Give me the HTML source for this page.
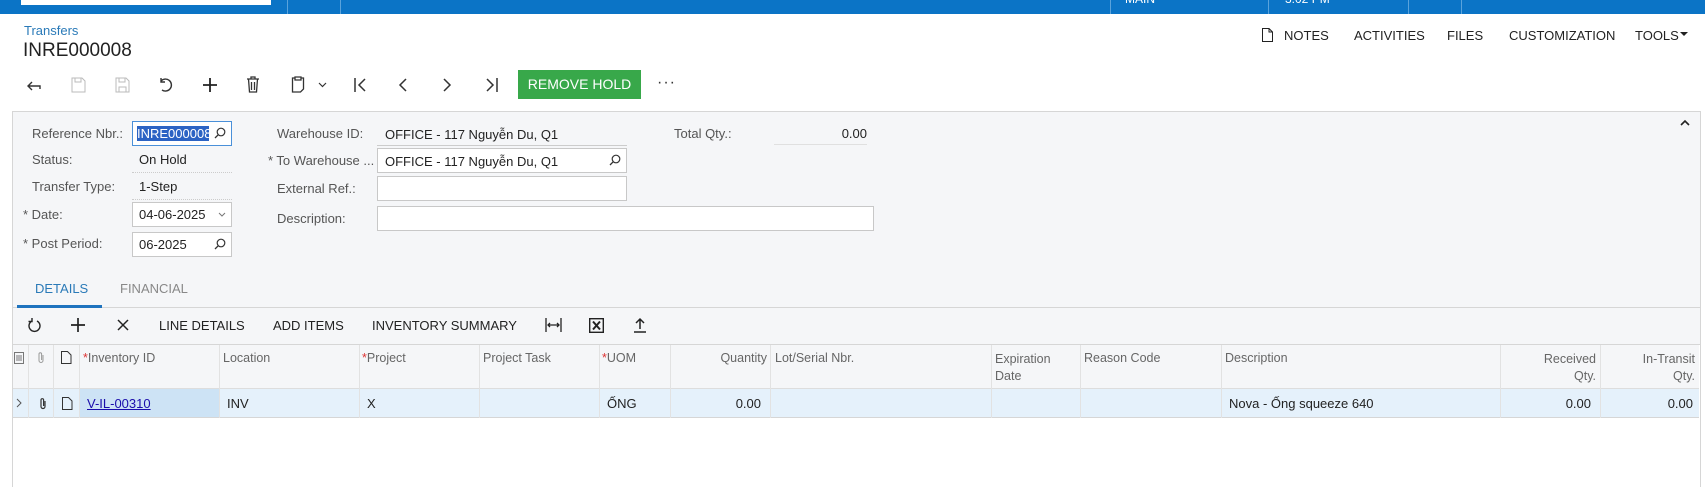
<!DOCTYPE html>
<html><head><meta charset="utf-8"><style>
*{box-sizing:border-box;margin:0;padding:0}
body{width:1705px;height:487px;overflow:hidden;background:#fff;font-family:"Liberation Sans","Noto Sans CJK SC",sans-serif;font-size:13px;color:#222;position:relative}
.a{position:absolute;white-space:nowrap}
.lbl{color:#555}
.inp{position:absolute;background:#fff;border:1px solid #c8c8c8;height:25px}
.hd{color:#666;font-size:12.5px}
.vl{position:absolute;top:345px;width:1px;height:73px;background:#e2e2e2}
.star{color:#d33}
svg{position:absolute}
</style></head><body>
<!-- top bar -->
<div class="a" style="left:0;top:0;width:1705px;height:14px;background:#0b74c6"></div>
<div class="a" style="left:21px;top:0;width:250px;height:5px;background:#fff"></div>
<div class="a" style="left:287px;top:0;width:1px;height:14px;background:#5aa3dc"></div>
<div class="a" style="left:340px;top:0;width:1px;height:14px;background:#5aa3dc"></div>
<div class="a" style="left:1110px;top:0;width:1px;height:14px;background:#5aa3dc"></div>
<div class="a" style="left:1268px;top:0;width:1px;height:14px;background:#5aa3dc"></div>
<div class="a" style="left:1408px;top:0;width:1px;height:14px;background:#5aa3dc"></div>
<div class="a" style="left:1461px;top:0;width:1px;height:14px;background:#5aa3dc"></div>
<div class="a" style="left:1125px;top:-8px;color:#fff;font-size:12px">MAIN</div>
<div class="a" style="left:1285px;top:-8px;color:#fff;font-size:12px">3:02 PM</div>

<div class="a" style="left:24px;top:23px;color:#2a7ab8;font-size:13px">Transfers</div>
<div class="a" style="left:23px;top:40px;font-size:19px;color:#222">INRE000008</div>

<!-- right links -->
<svg style="left:1262px;top:28px" width="11" height="14" viewBox="0 0 11 14"><path d="M.5.5h6.5l3.5 3.5v9.5h-10z M7 .5v3.5h3.5" fill="none" stroke="#222"/></svg>
<div class="a" style="left:1284px;top:28px">NOTES</div>
<div class="a" style="left:1354px;top:28px">ACTIVITIES</div>
<div class="a" style="left:1447px;top:28px">FILES</div>
<div class="a" style="left:1509px;top:28px">CUSTOMIZATION</div>
<div class="a" style="left:1635px;top:28px">TOOLS</div>
<div class="a" style="left:1680px;top:32px;width:0;height:0;border-left:4px solid transparent;border-right:4px solid transparent;border-top:4px solid #222"></div>

<!-- toolbar -->
<svg style="left:26px;top:77px" width="16" height="16" viewBox="0 0 16 16"><path d="M14 12V9H3 M6 5L2 9l4 4" fill="none" stroke="#333" stroke-width="1.4"/></svg>
<svg style="left:71px;top:77px" width="15" height="16" viewBox="0 0 15 16"><path d="M1 1h10l3 3v11H1z M4 1v4h6V1" fill="none" stroke="#bbb"/></svg>
<svg style="left:115px;top:77px" width="15" height="16" viewBox="0 0 15 16"><path d="M1 1h10l3 3v11H1z M4 1v4h6V1 M4 15v-5h7v5" fill="none" stroke="#bbb"/></svg>
<svg style="left:157px;top:77px" width="16" height="16" viewBox="0 0 16 16"><path d="M4 4a6 6 0 1 1 1 9 M4 1v4h4" fill="none" stroke="#333" stroke-width="1.4"/></svg>
<svg style="left:202px;top:77px" width="16" height="16" viewBox="0 0 16 16"><path d="M8 1v14M1 8h14" stroke="#222" stroke-width="1.8"/></svg>
<svg style="left:246px;top:76px" width="14" height="17" viewBox="0 0 14 17"><path d="M1 3h12M5 3V1h4v2M2.5 3l1 13h7l1-13M5.5 6v8M8.5 6v8" fill="none" stroke="#333" stroke-width="1.3"/></svg>
<svg style="left:291px;top:76px" width="14" height="17" viewBox="0 0 14 17"><path d="M4 2H1.5v14h8l3-3V2H10 M4 1h6v3H4z" fill="none" stroke="#333" stroke-width="1.3"/></svg>
<svg style="left:318px;top:82px" width="9" height="6" viewBox="0 0 9 6"><path d="M1 1l3.5 3.5L8 1" fill="none" stroke="#333" stroke-width="1.2"/></svg>
<svg style="left:353px;top:77px" width="14" height="16" viewBox="0 0 14 16"><path d="M2 1v14 M12 2L6 8l6 6" fill="none" stroke="#333" stroke-width="1.5"/></svg>
<svg style="left:398px;top:77px" width="10" height="16" viewBox="0 0 10 16"><path d="M8 2L2 8l6 6" fill="none" stroke="#333" stroke-width="1.5"/></svg>
<svg style="left:442px;top:77px" width="10" height="16" viewBox="0 0 10 16"><path d="M2 2l6 6-6 6" fill="none" stroke="#333" stroke-width="1.5"/></svg>
<svg style="left:485px;top:77px" width="14" height="16" viewBox="0 0 14 16"><path d="M12 1v14 M2 2l6 6-6 6" fill="none" stroke="#333" stroke-width="1.5"/></svg>
<div class="a" style="left:518px;top:70px;width:123px;height:29px;background:#38a84a;color:#fff;font-size:14px;line-height:29px;text-align:center">REMOVE HOLD</div>
<div class="a" style="left:657px;top:74px;font-size:16px;color:#333;letter-spacing:1px">···</div>

<!-- panel -->
<div class="a" style="left:12px;top:111px;width:1689px;height:376px;background:#fff;border:1px solid #d6d6d6;border-bottom:none"></div>
<div class="a" style="left:13px;top:112px;width:1687px;height:232px;background:#f5f6f8"></div>
<svg style="left:1680px;top:119px" width="10" height="7" viewBox="0 0 10 7"><path d="M1 6l4-4 4 4" fill="none" stroke="#222" stroke-width="1.6"/></svg>

<div class="a lbl" style="left:32px;top:126px">Reference Nbr.:</div>
<div class="inp" style="left:132px;top:121px;width:100px;border-color:#4a90d9;border-width:1.5px"></div>
<div class="a" style="left:137px;top:126px;background:#2b63c4;color:#fff;width:72px;overflow:hidden">INRE000008</div>
<svg style="left:214px;top:127px" width="12" height="12" viewBox="0 0 12 12"><circle cx="7" cy="5" r="3.8" fill="none" stroke="#333" stroke-width="1.2"/><path d="M4.3 7.7L1 11" stroke="#333" stroke-width="1.3"/></svg>
<div class="a lbl" style="left:32px;top:152px">Status:</div>
<div class="a" style="left:139px;top:152px">On Hold</div>
<div class="a" style="left:132px;top:172px;width:100px;border-top:1px dotted #ccc"></div>
<div class="a lbl" style="left:32px;top:179px">Transfer Type:</div>
<div class="a" style="left:139px;top:179px">1-Step</div>
<div class="a" style="left:132px;top:199px;width:100px;border-top:1px dotted #ccc"></div>
<div class="a lbl" style="left:23px;top:207px">* Date:</div>
<div class="inp" style="left:132px;top:202px;width:100px"></div>
<div class="a" style="left:139px;top:207px">04-06-2025</div>
<svg style="left:218px;top:212px" width="8" height="5" viewBox="0 0 8 5"><path d="M1 1l3 3 3-3" fill="none" stroke="#777"/></svg>
<div class="a lbl" style="left:23px;top:236px">* Post Period:</div>
<div class="inp" style="left:132px;top:232px;width:100px"></div>
<div class="a" style="left:139px;top:237px">06-2025</div>
<svg style="left:214px;top:238px" width="12" height="12" viewBox="0 0 12 12"><circle cx="7" cy="5" r="3.8" fill="none" stroke="#333" stroke-width="1.2"/><path d="M4.3 7.7L1 11" stroke="#333" stroke-width="1.3"/></svg>

<div class="a lbl" style="left:277px;top:126px">Warehouse ID:</div>
<div class="a" style="left:385px;top:127px">OFFICE - 117 Nguyễn Du, Q1</div>
<div class="a" style="left:377px;top:145px;width:250px;border-top:1px solid #ccc"></div>
<div class="a lbl" style="left:268px;top:153px">* To Warehouse ...</div>
<div class="inp" style="left:377px;top:148px;width:250px"></div>
<div class="a" style="left:385px;top:154px">OFFICE - 117 Nguyễn Du, Q1</div>
<svg style="left:609px;top:154px" width="12" height="12" viewBox="0 0 12 12"><circle cx="7" cy="5" r="3.8" fill="none" stroke="#333" stroke-width="1.2"/><path d="M4.3 7.7L1 11" stroke="#333" stroke-width="1.3"/></svg>
<div class="a lbl" style="left:277px;top:181px">External Ref.:</div>
<div class="inp" style="left:377px;top:176px;width:250px"></div>
<div class="a lbl" style="left:277px;top:211px">Description:</div>
<div class="inp" style="left:377px;top:206px;width:497px"></div>

<div class="a lbl" style="left:674px;top:126px">Total Qty.:</div>
<div class="a" style="left:774px;top:126px;width:93px;text-align:right">0.00</div>
<div class="a" style="left:774px;top:144px;width:93px;border-top:1px solid #e0e0e0"></div>

<!-- tabs -->
<div class="a" style="left:35px;top:281px;color:#2a7ab8">DETAILS</div>
<div class="a" style="left:120px;top:281px;color:#888">FINANCIAL</div>
<div class="a" style="left:13px;top:307px;width:1687px;height:1px;background:#d6d6d6"></div>
<div class="a" style="left:17px;top:305px;width:85px;height:3px;background:#1e73be"></div>

<!-- grid toolbar -->
<svg style="left:28px;top:318px" width="14" height="15" viewBox="0 0 14 15"><path d="M4 3a5.5 5.5 0 1 0 5 0 M4 0v3.5H.5" fill="none" stroke="#222" stroke-width="1.4"/></svg>
<svg style="left:71px;top:318px" width="14" height="14" viewBox="0 0 14 14"><path d="M7 0v14M0 7h14" stroke="#222" stroke-width="1.7"/></svg>
<svg style="left:117px;top:319px" width="12" height="12" viewBox="0 0 12 12"><path d="M1 1l10 10M11 1L1 11" stroke="#222" stroke-width="1.5"/></svg>
<div class="a" style="left:159px;top:318px">LINE DETAILS</div>
<div class="a" style="left:273px;top:318px">ADD ITEMS</div>
<div class="a" style="left:372px;top:318px">INVENTORY SUMMARY</div>
<svg style="left:545px;top:318px" width="17" height="14" viewBox="0 0 17 14"><path d="M1 0v14M16 0v14M3 7h11M5 5l-2 2 2 2M12 5l2 2-2 2" fill="none" stroke="#222" stroke-width="1.3"/></svg>
<svg style="left:589px;top:318px" width="15" height="15" viewBox="0 0 15 15"><rect x=".7" y=".7" width="13.6" height="13.6" fill="none" stroke="#222" stroke-width="1.4"/><path d="M4 3.5l7 8M11 3.5l-7 8" stroke="#222" stroke-width="2"/></svg>
<svg style="left:633px;top:317px" width="14" height="16" viewBox="0 0 14 16"><path d="M7 12V2M3 6l4-4 4 4M1 15h12" fill="none" stroke="#222" stroke-width="1.5"/></svg>
<div class="a" style="left:13px;top:344px;width:1687px;height:1px;background:#d6d6d6"></div>

<!-- grid -->
<div class="a" style="left:13px;top:345px;width:1686px;height:44px;background:#f5f6f8;border-bottom:1px solid #ddd"></div>
<div class="a" style="left:13px;top:389px;width:1686px;height:29px;background:#e5f1fb;border-bottom:1px solid #d6d6d6"></div>
<div class="a" style="left:79px;top:389px;width:140px;height:28px;background:#cde3f5"></div>
<div class="vl" style="left:28px"></div><div class="vl" style="left:53px"></div><div class="vl" style="left:79px"></div>
<div class="vl" style="left:219px"></div><div class="vl" style="left:359px"></div><div class="vl" style="left:479px"></div>
<div class="vl" style="left:599px"></div><div class="vl" style="left:670px"></div><div class="vl" style="left:770px"></div>
<div class="vl" style="left:991px"></div><div class="vl" style="left:1080px"></div><div class="vl" style="left:1221px"></div>
<div class="vl" style="left:1500px"></div><div class="vl" style="left:1600px"></div>

<svg style="left:14px;top:352px" width="10" height="12" viewBox="0 0 10 12"><rect x=".5" y=".5" width="9" height="11" fill="none" stroke="#777"/><path d="M2 4h6M2 6h6M2 8h6" stroke="#777"/></svg>
<svg style="left:37px;top:351px" width="8" height="13" viewBox="0 0 8 13"><path d="M6 4v5.5a2 2 0 0 1-4 0V3a1.3 1.3 0 0 1 2.6 0v6" fill="none" stroke="#999"/></svg>
<svg style="left:61px;top:351px" width="11" height="13" viewBox="0 0 11 13"><path d="M.5.5h6l3.5 3.5v8.5H.5z" fill="none" stroke="#333"/></svg>
<div class="a hd" style="left:83px;top:351px"><span class="star">*</span>Inventory ID</div>
<div class="a hd" style="left:223px;top:351px">Location</div>
<div class="a hd" style="left:362px;top:351px"><span class="star">*</span>Project</div>
<div class="a hd" style="left:483px;top:351px">Project Task</div>
<div class="a hd" style="left:602px;top:351px"><span class="star">*</span>UOM</div>
<div class="a hd" style="left:670px;top:351px;width:97px;text-align:right">Quantity</div>
<div class="a hd" style="left:775px;top:351px">Lot/Serial Nbr.</div>
<div class="a hd" style="left:995px;top:351px;line-height:17px">Expiration<br>Date</div>
<div class="a hd" style="left:1084px;top:351px">Reason Code</div>
<div class="a hd" style="left:1225px;top:351px">Description</div>
<div class="a hd" style="left:1500px;top:351px;width:96px;text-align:right;line-height:17px">Received<br>Qty.</div>
<div class="a hd" style="left:1600px;top:351px;width:95px;text-align:right;line-height:17px">In-Transit<br>Qty.</div>

<svg style="left:16px;top:398px" width="6" height="10" viewBox="0 0 6 10"><path d="M1 1l4 4-4 4" fill="none" stroke="#555"/></svg>
<svg style="left:39px;top:397px" width="8" height="13" viewBox="0 0 8 13"><path d="M6 4v5.5a2 2 0 0 1-4 0V3a1.3 1.3 0 0 1 2.6 0v6" fill="none" stroke="#333" stroke-width="1.2"/></svg>
<svg style="left:62px;top:397px" width="11" height="13" viewBox="0 0 11 13"><path d="M.5.5h6l3.5 3.5v8.5H.5z" fill="none" stroke="#333"/></svg>
<div class="a" style="left:87px;top:396px;color:#1a0dab;text-decoration:underline">V-IL-00310</div>
<div class="a" style="left:227px;top:396px">INV</div>
<div class="a" style="left:367px;top:396px">X</div>
<div class="a" style="left:607px;top:396px">ỐNG</div>
<div class="a" style="left:670px;top:396px;width:91px;text-align:right">0.00</div>
<div class="a" style="left:1229px;top:396px">Nova - Ống squeeze 640</div>
<div class="a" style="left:1500px;top:396px;width:91px;text-align:right">0.00</div>
<div class="a" style="left:1600px;top:396px;width:93px;text-align:right">0.00</div>
</body></html>
